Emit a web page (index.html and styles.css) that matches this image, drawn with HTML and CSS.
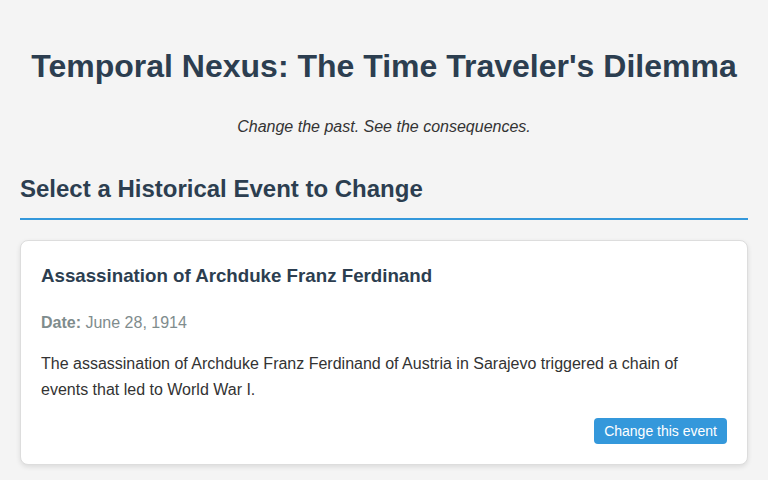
FILE: index.html
```html
<!DOCTYPE html>
<html lang="en">
<head>
    <meta charset="UTF-8">
    <title>Temporal Nexus</title>
    <link rel="stylesheet" href="styles.css">
</head>
<body>
<header class="intro">
    <h1>Temporal Nexus: The Time Traveler's Dilemma</h1>
    <p class="tagline">Change the past. See the consequences.</p>
</header>
<section class="events">
    <h2>Select a Historical Event to Change</h2>
    <div class="event-card">
        <h3>Assassination of Archduke Franz Ferdinand</h3>
        <p class="event-date"><strong>Date:</strong> June 28, 1914</p>
        <p>The assassination of Archduke Franz Ferdinand of Austria in Sarajevo triggered a chain of events that led to World War I.</p>
        <div class="event-actions">
            <button type="button">Change this event</button>
        </div>
    </div>
</section>
</body>
</html>
```

FILE: styles.css
```css
body {
    font-family: "Liberation Sans", Arial, sans-serif;
    line-height: 1.6;
    color: #333;
    background-color: #f4f4f4;
    margin: 0;
    padding: 20px;
}
h1, h2, h3 {
    color: #2c3e50;
}
h1 {
    font-size: 32px;
    margin: 21.44px 0;
    text-align: center;
}
.intro {
    margin-bottom: 30px;
}
.tagline {
    text-align: center;
    font-style: italic;
}
h2 {
    font-size: 24px;
    margin: 19.92px 0;
    padding-bottom: 10px;
    border-bottom: 2px solid #3498db;
}
.event-card {
    background: #fff;
    border: 1px solid #ddd;
    border-radius: 8px;
    padding: 20px;
    box-shadow: 0 2px 5px rgba(0, 0, 0, 0.1);
}
.event-card h3 {
    font-size: 18.72px;
    margin: 0 0 18.72px;
}
.event-date {
    color: #7f8c8d;
}
.event-card p {
    margin: 16px 0;
}
.event-actions {
    text-align: right;
}
button {
    background-color: #3498db;
    color: white;
    border: none;
    border-radius: 4px;
    padding: 5px 10px;
    font-family: "Liberation Sans", Arial, sans-serif;
    font-size: 14px;
    cursor: pointer;
}
```
